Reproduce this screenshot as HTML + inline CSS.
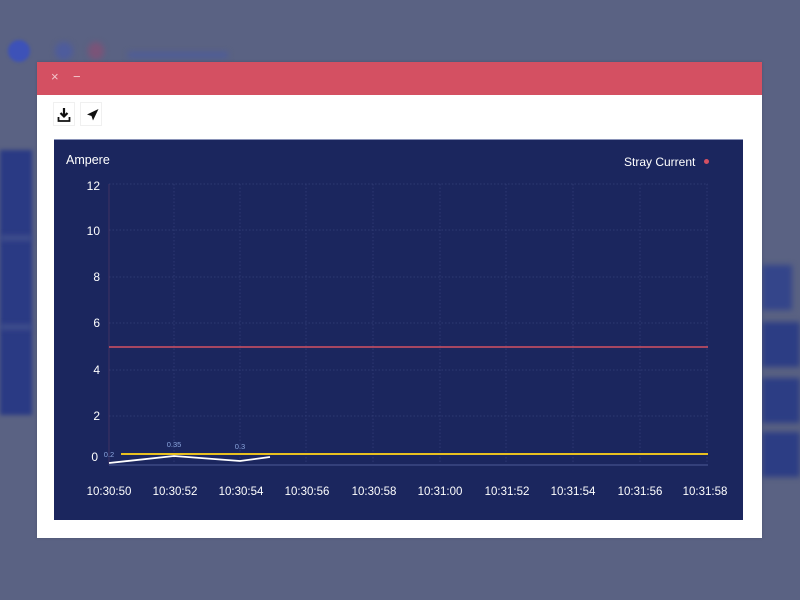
<!DOCTYPE html>
<html><head><meta charset="utf-8"><style>
*{margin:0;padding:0;box-sizing:border-box}
body{width:800px;height:600px;overflow:hidden;background:#5a6283;font-family:"Liberation Sans",sans-serif;position:relative}
.abs{position:absolute}
.bl{filter:blur(3px)}
</style></head><body>
<!-- blurred background -->
<div class="abs" style="left:8px;top:40px;width:22px;height:22px;border-radius:50%;background:#3d52b8;filter:blur(1.5px)"></div>
<div class="abs bl" style="left:55px;top:42px;width:18px;height:18px;border-radius:50%;background:#4e5c9c"></div>
<div class="abs bl" style="left:88px;top:42px;width:16px;height:18px;border-radius:50%;background:#7a5478"></div>
<div class="abs bl" style="left:128px;top:52px;width:100px;height:6px;background:#4e5c98"></div>
<div class="abs" style="left:0;top:150px;width:32px;height:265px;background:#2a3a84;filter:blur(2px)"></div>
<div class="abs bl" style="left:0;top:236px;width:32px;height:4px;background:#4a5890"></div>
<div class="abs bl" style="left:0;top:325px;width:32px;height:4px;background:#4a5890"></div>
<div class="abs bl" style="left:762px;top:265px;width:30px;height:45px;background:#34458a"></div>
<div class="abs bl" style="left:762px;top:322px;width:38px;height:45px;background:#2c3d84"></div>
<div class="abs bl" style="left:762px;top:378px;width:38px;height:45px;background:#2c3d84"></div>
<div class="abs bl" style="left:762px;top:432px;width:38px;height:45px;background:#2c3d84"></div>
<!-- modal -->
<div class="abs" style="left:37px;top:62px;width:725px;height:476px;background:#fff;box-shadow:0 0 3px rgba(0,0,0,.15)"></div>
<div class="abs" style="left:37px;top:62px;width:725px;height:33px;background:#d45062"></div>
<div class="abs" style="left:51px;top:69px;color:#f3c6cc;font-size:13px">×</div>
<div class="abs" style="left:73px;top:69px;color:#f3c6cc;font-size:13px">−</div>
<div class="abs" style="left:53px;top:102px;width:22px;height:24px;border:1px solid #f0f0f0;background:#fff"></div>
<div class="abs" style="left:80px;top:102px;width:22px;height:24px;border:1px solid #f0f0f0;background:#fff"></div>
<svg class="abs" style="left:53px;top:102px" width="50" height="24">
<path d="M11 6v8M7.5 11l3.5 3.5 3.5-3.5" stroke="#111" stroke-width="2.2" fill="none"/>
<path d="M5.5 15v4h11v-4" stroke="#111" stroke-width="1.8" fill="none"/>
<path d="M34 12.5l11.5-5.5-5.5 11.5-1.5-4.5z" fill="#111"/>
</svg>
<!-- chart -->
<div class="abs" style="left:54px;top:139px;width:689px;height:381px;background:#1b265e;border-top:1px solid #8a93b8"></div>
<div class="abs" style="left:66px;top:153px;color:#fff;font-size:12.5px">Ampere</div>
<div class="abs" style="left:624px;top:155px;color:#fff;font-size:12px">Stray Current</div>
<div class="abs" style="left:704px;top:159px;width:5px;height:5px;border-radius:50%;background:#d45062"></div>
<svg class="abs" style="left:0;top:0" width="800" height="600" font-family="Liberation Sans,sans-serif">
<g stroke="#35417a" stroke-width="0.7" stroke-dasharray="1.5,2">
<line x1="109" y1="184" x2="708" y2="184"/><line x1="109" y1="230" x2="708" y2="230"/>
<line x1="109" y1="277" x2="708" y2="277"/><line x1="109" y1="323" x2="708" y2="323"/>
<line x1="109" y1="370" x2="708" y2="370"/><line x1="109" y1="416" x2="708" y2="416"/>
<line x1="174" y1="184" x2="174" y2="465"/><line x1="240" y1="184" x2="240" y2="465"/>
<line x1="306" y1="184" x2="306" y2="465"/><line x1="373" y1="184" x2="373" y2="465"/>
<line x1="440" y1="184" x2="440" y2="465"/><line x1="506" y1="184" x2="506" y2="465"/>
<line x1="573" y1="184" x2="573" y2="465"/><line x1="640" y1="184" x2="640" y2="465"/>
<line x1="707" y1="184" x2="707" y2="465"/>
</g>
<line x1="109" y1="184" x2="109" y2="465" stroke="#503766" stroke-width="0.7"/>
<line x1="109" y1="465" x2="708" y2="465" stroke="#34407a" stroke-width="2"/>
<line x1="109" y1="347" x2="708" y2="347" stroke="#d45062" stroke-width="1.5"/>
<line x1="121" y1="454" x2="708" y2="454" stroke="#e8c020" stroke-width="2"/>
<polyline points="109,463 174,456 240,461 270,457" fill="none" stroke="#fff" stroke-width="1.8"/>
<g fill="#8aa4dc" font-size="7.5" text-anchor="middle">
<text x="109" y="457">0.2</text><text x="174" y="447">0.35</text><text x="240" y="449">0.3</text></g>
<g fill="#fff" font-size="12" text-anchor="end">
<text x="100" y="190">12</text><text x="100" y="235">10</text><text x="100" y="281">8</text>
<text x="100" y="327">6</text><text x="100" y="374">4</text><text x="100" y="420">2</text><text x="98" y="461">0</text></g>
<g fill="#fff" font-size="11.5" text-anchor="middle">
<text x="109" y="495">10:30:50</text><text x="175" y="495">10:30:52</text><text x="241" y="495">10:30:54</text>
<text x="307" y="495">10:30:56</text><text x="374" y="495">10:30:58</text><text x="440" y="495">10:31:00</text>
<text x="507" y="495">10:31:52</text><text x="573" y="495">10:31:54</text><text x="640" y="495">10:31:56</text>
<text x="705" y="495">10:31:58</text></g>
</svg>
</body></html>
